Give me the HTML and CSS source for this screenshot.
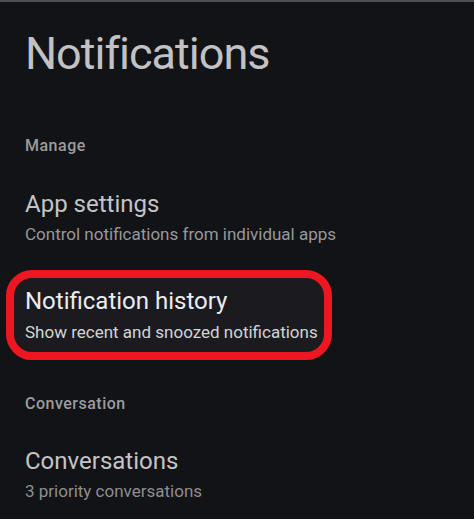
FILE: index.html
```
<!DOCTYPE html>
<html>
<head>
<meta charset="utf-8">
<link rel="stylesheet" href="styles.css">
</head>
<body>
<div class="topbar"></div>
<main class="page">
  <h1 class="title">Notifications</h1>
  <div class="section">Manage</div>
  <div class="item">
    <div class="item-title">App settings</div>
    <div class="item-sub">Control notifications from individual apps</div>
  </div>
  <div class="item item-highlight">
    <div class="item-title">Notification history</div>
    <div class="item-sub">Show recent and snoozed notifications</div>
  </div>
  <div class="section section-conv">Conversation</div>
  <div class="item item-conv">
    <div class="item-title">Conversations</div>
    <div class="item-sub">3 priority conversations</div>
  </div>
</main>
</body>
</html>
```
FILE: styles.css
```
html, body {
  margin: 0;
  padding: 0;
  background: #121316;
  height: 100%;
  overflow: hidden;
}
body {
  font-family: Roboto, "Noto Sans", sans-serif;
}
.topbar {
  height: 2px;
  background: #505052;
}
.page {
  display: flex;
  flex-direction: column;
  align-items: flex-start;
}
.title {
  margin: 26px 0 0 25px;
  font-size: 45px;
  line-height: 52px;
  font-weight: 400;
  letter-spacing: -1px;
  color: #c2c2c4;
}
.section {
  margin: 56px 0 0 25px;
  font-size: 16px;
  line-height: 20px;
  font-weight: 500;
  letter-spacing: 0.5px;
  color: #9c9c9e;
}
.item {
  margin: 34px 0 0 25px;
}
.item-title {
  font-size: 24px;
  line-height: 28px;
  color: #c4c4c6;
}
.item-sub {
  margin-top: 5px;
  font-size: 17px;
  line-height: 22px;
  color: #98989a;
}
.item-highlight {
  margin: 25px 0 0 6px;
  width: 299px;
  padding: 9px 0 9px 11px;
  border: 8px solid #ee1620;
  border-radius: 26px;
  background: #1b1b1f;
}
.item-highlight .item-title {
  color: #ececec;
}
.item-highlight .item-sub {
  margin-top: 6px;
  color: #d4d4d6;
}
.section-conv {
  margin-top: 34px;
}
.item-conv {
  margin-top: 33px;
}
.item-conv .item-sub {
  color: #8e8e90;
}
```
